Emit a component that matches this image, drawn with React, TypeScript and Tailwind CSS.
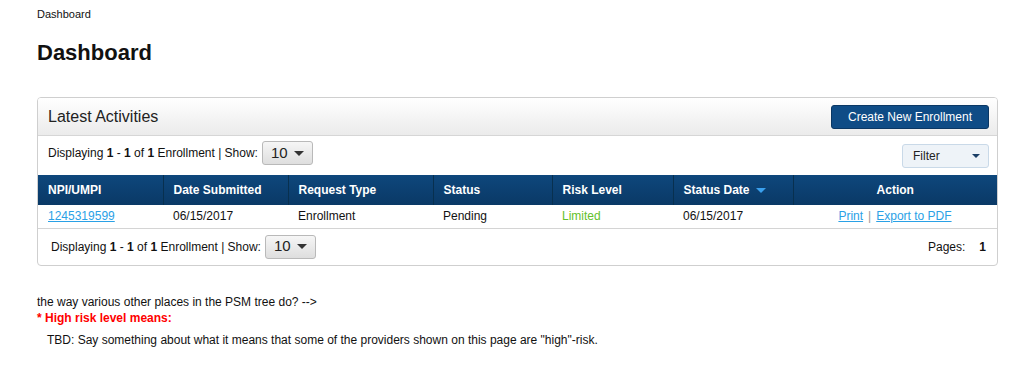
const columns = [
  { label: "NPI/UMPI", w: "w-[125px]" },
  { label: "Date Submitted", w: "w-[125px]" },
  { label: "Request Type", w: "w-[145px]" },
  { label: "Status", w: "w-[119px]" },
  { label: "Risk Level", w: "w-[121px]" },
  { label: "Status Date", w: "w-[120px]", sorted: true },
];

const Caret = ({ className = "" }: { className?: string }) => (
  <span
    className={`inline-block w-0 h-0 border-l-[5px] border-r-[5px] border-t-[5px] border-l-transparent border-r-transparent ${className}`}
  />
);

const ShowSelect = () => (
  <span className="inline-flex items-center gap-[6px] h-6 px-[8px] ml-[4px] rounded-[3px] border border-[#b9b9b9] bg-gradient-to-b from-[#f6f6f6] to-[#dedede] text-[15px] text-[#222]">
    10
    <Caret className="border-t-[#333]" />
  </span>
);

const Displaying = ({ className = "" }: { className?: string }) => (
  <span className={`flex items-center text-[12px] text-[#111] ${className}`}>
    Displaying&nbsp;<b>1</b>&nbsp;-&nbsp;<b>1</b>&nbsp;of&nbsp;<b>1</b>&nbsp;Enrollment&nbsp;|&nbsp;Show:
    <ShowSelect />
  </span>
);

export default function App() {
  return (
    <div className="min-h-[380px] bg-white px-[37px] pt-[8px] text-[12px] text-[#111] font-['Liberation_Sans',Arial,sans-serif]">
      <div className="text-[11px] leading-[13px]">Dashboard</div>
      <h1 className="mt-[19px] text-[22px] font-bold leading-[26px]">Dashboard</h1>

      <div className="mt-[31px] w-[961px] rounded-[4px] border border-[#cfcfcf] overflow-hidden">
        <div className="flex items-center justify-between h-[38px] pl-[10px] pr-[8px] border-b border-[#d6d6d6] bg-gradient-to-b from-white to-[#ebebeb]">
          <span className="text-[16px] text-[#222]">Latest Activities</span>
          <button className="h-[24px] w-[158px] rounded-[3px] border border-[#0a3764] bg-[#0f4c86] text-[12px] text-white">
            Create New Enrollment
          </button>
        </div>

        <div className="flex items-center justify-between h-[39px] pl-[10px] pr-[8px]">
          <Displaying className="mb-[5px]" />
          <button className="flex items-center justify-between h-[24px] w-[87px] pl-[10px] pr-[8px] rounded-[3px] border border-[#c9d9e8] bg-[#eef3f8] text-[12px] text-[#222]">
            Filter
            <Caret className="border-t-[#1a3f66] !border-l-[4px] !border-r-[4px] !border-t-[4px]" />
          </button>
        </div>

        <table className="w-full border-collapse table-fixed">
          <thead>
            <tr className="h-[30px] bg-gradient-to-b from-[#0e477c] to-[#0a3966] text-white text-[12px] font-bold">
              {columns.map((c) => (
                <th key={c.label} className={`${c.w} text-left pl-[10px] font-bold border-r border-[#08304f]`}>
                  {c.label}
                  {c.sorted && <Caret className="ml-[6px] mb-[1px] border-t-[#3aa0ee]" />}
                </th>
              ))}
              <th className="text-center font-bold">Action</th>
            </tr>
          </thead>
          <tbody>
            <tr className="h-[23px] border-b border-[#d4d4d4] text-[12px]">
              <td className="pl-[10px]">
                <a href="#" className="text-[#2aa1e6] underline">1245319599</a>
              </td>
              <td className="pl-[10px]">06/15/2017</td>
              <td className="pl-[10px]">Enrollment</td>
              <td className="pl-[10px]">Pending</td>
              <td className="pl-[10px] text-[#63c12b]">Limited</td>
              <td className="pl-[10px]">06/15/2017</td>
              <td className="text-center">
                <a href="#" className="text-[#2aa1e6] underline">Print</a>
                <span className="text-[#999] mx-[5px]">|</span>
                <a href="#" className="text-[#2aa1e6] underline">Export to PDF</a>
              </td>
            </tr>
          </tbody>
        </table>

        <div className="flex items-center justify-between h-[36px] pl-[13px] pr-[11px]">
          <Displaying />
          <span className="text-[12px]">
            Pages:<b className="ml-[14px]">1</b>
          </span>
        </div>
      </div>

      <div className="mt-[28px] leading-[16px]">the way various other places in the PSM tree do? --&gt;</div>
      <div className="text-[#ff0000] font-bold leading-[16px]">* High risk level means:</div>
      <div className="mt-[6px] pl-[10px] leading-[16px]">
        TBD: Say something about what it means that some of the providers shown on this page are "high"-risk.
      </div>
    </div>
  );
}
